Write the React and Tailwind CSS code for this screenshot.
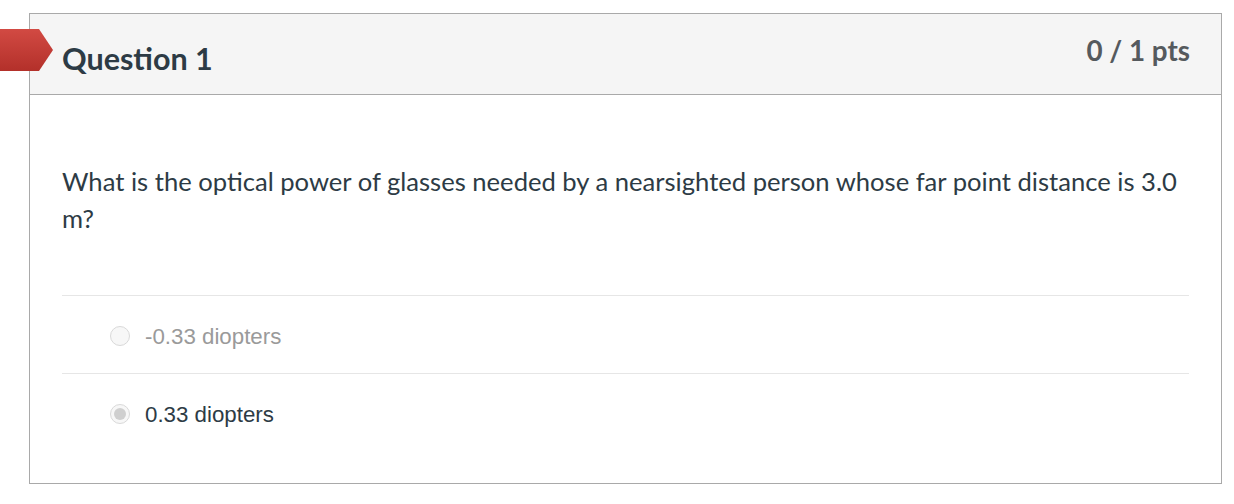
import React from 'react';

const answers = [
    { label: '-0.33 diopters', selected: false },
    { label: '0.33 diopters', selected: true },
];

const Radio = ({ selected }) => (
    <span className="w-[20px] h-[20px] rounded-full border border-[#d9d9d9] bg-[#f7f7f7] flex items-center justify-center shrink-0 mt-[2px]">
        {selected && <span className="w-[12px] h-[12px] rounded-full bg-[#cfcfcf]" />}
    </span>
);

const App = () => {
    return (
        <div className="w-[1234px] h-[504px] bg-white relative pt-[13px] pl-[29px]" style={{ fontFamily: 'Lato, "Noto Sans", sans-serif' }}>
            {/* flag marker */}
            <div className="absolute left-0 top-[29px] w-[53px] h-[42px]">
                <svg width="53" height="42" viewBox="0 0 53 42">
                    <defs>
                        <linearGradient id="flag" x1="0" y1="0" x2="0" y2="1">
                            <stop offset="0" stopColor="#d24a43" />
                            <stop offset="1" stopColor="#b3302a" />
                        </linearGradient>
                    </defs>
                    <polygon points="0,0 39,0 53,21 39,42 0,42" fill="url(#flag)" />
                </svg>
            </div>

            <div className="w-[1193px] h-[471px] border border-[#a9a9a9]">
                <div className="h-[81px] bg-[#f5f5f5] border-b border-[#a9a9a9] flex justify-between pl-[32px] pr-[31px]">
                    <h2 className="text-[30.5px] font-bold text-[#2d3b45] mt-[26px] leading-[36px]">Question 1</h2>
                    <div className="text-[27.8px] font-bold text-[#555a5e] mt-[21px] leading-[32px]">0 / 1 pts</div>
                </div>

                <div className="px-[32px] pt-[68px]">
                    <p className="text-[25.6px] leading-[37px] text-[#2d3b45] pr-[4px]">
                        What is the optical power of glasses needed by a nearsighted person whose far point distance is 3.0 m?
                    </p>

                    <div className="mt-[58px]">
                        {answers.map((a, idx) => (
                            <div key={idx} className="h-[78px] border-t border-[#e6e6e6] flex items-center pl-[48px] gap-[15px]">
                                <Radio selected={a.selected} />
                                <span
                                    className={a.selected ? 'text-[22.3px] text-[#2d3b45] pt-[4px]' : 'text-[22.3px] text-[#9a9a9a] pt-[4px]'}
                                    style={{ fontFamily: '"Liberation Sans", Arial, sans-serif' }}
                                >
                                    {a.label}
                                </span>
                            </div>
                        ))}
                    </div>
                </div>
            </div>
        </div>
    );
};

export default App;
